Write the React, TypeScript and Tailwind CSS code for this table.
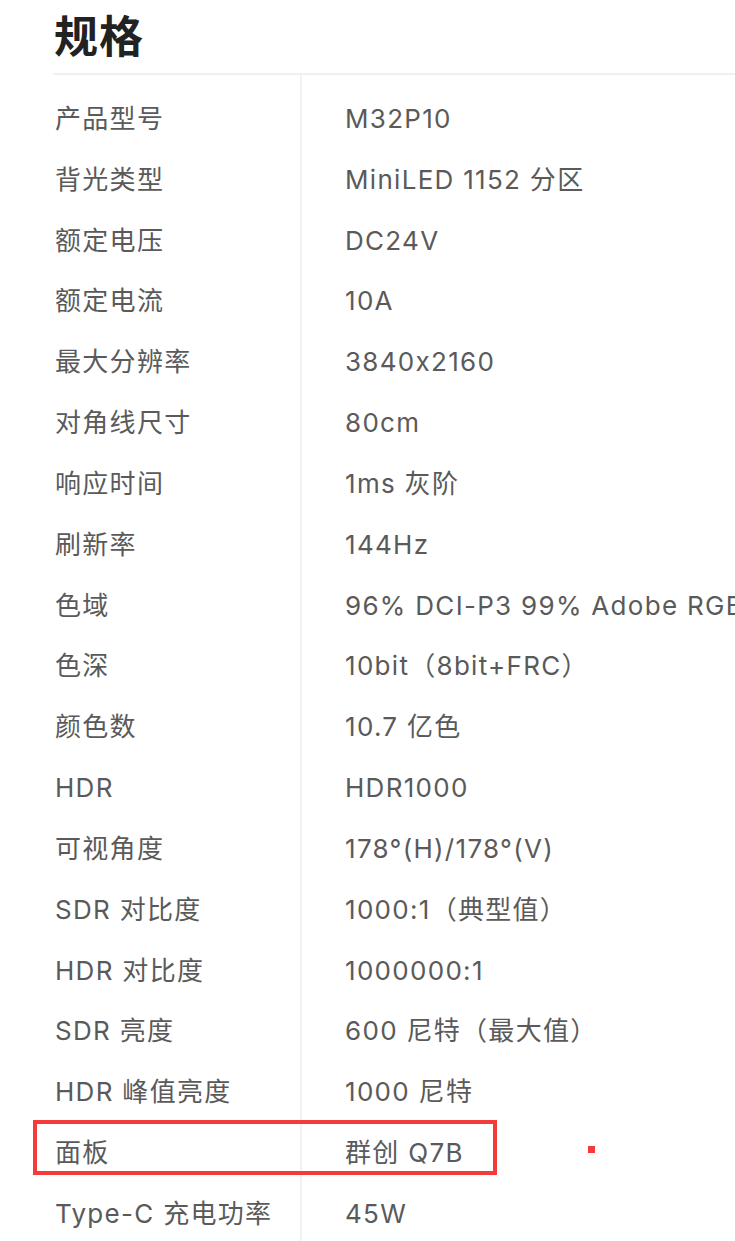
const rows: [string, string][] = [
  ['产品型号', 'M32P10'],
  ['背光类型', 'MiniLED 1152 分区'],
  ['额定电压', 'DC24V'],
  ['额定电流', '10A'],
  ['最大分辨率', '3840x2160'],
  ['对角线尺寸', '80cm'],
  ['响应时间', '1ms 灰阶'],
  ['刷新率', '144Hz'],
  ['色域', '96% DCI-P3 99% Adobe RGB'],
  ['色深', '10bit（8bit+FRC）'],
  ['颜色数', '10.7 亿色'],
  ['HDR', 'HDR1000'],
  ['可视角度', '178°(H)/178°(V)'],
  ['SDR 对比度', '1000:1（典型值）'],
  ['HDR 对比度', '1000000:1'],
  ['SDR 亮度', '600 尼特（最大值）'],
  ['HDR 峰值亮度', '1000 尼特'],
  ['面板', '群创 Q7B'],
  ['Type-C 充电功率', '45W'],
];

export default function App() {
  return (
    <div
      className="w-[735px] h-[1241px] overflow-hidden bg-white"
      style={{ fontFamily: 'Inter, "Noto Sans CJK SC", sans-serif' }}
    >
      {/* Title */}
      <div className="pl-[54px] h-[73px] flex items-center">
        <h2 className="text-[44px] font-bold text-[#222] leading-none tracking-wide">规格</h2>
      </div>

      {/* Spec table */}
      <div className="ml-[53px] border-t-2 border-[#f0f0f0] flex flex-col">
        <div className="w-[249px] h-[13px] border-r-2 border-[#f2f2f2]"></div>
        {rows.map(([label, value]) => (
          <div key={label} className="relative flex h-[60.83px] text-[26px] tracking-[1.3px] text-[#5a5a5a] whitespace-nowrap">
            <div className="w-[249px] shrink-0 pl-[2px] flex items-center border-r-2 border-[#f2f2f2]">{label}</div>
            <div className="pl-[43px] shrink-0 flex items-center">{value}</div>
            {label === '面板' && (
              <>
                <div className="absolute left-[-20px] top-[-2px] w-[464px] h-[55px] border-[4px] border-[#f53a3a]"></div>
                <div className="absolute left-[535px] top-[24px] w-[7px] h-[7px] bg-[#f53a3a]"></div>
              </>
            )}
          </div>
        ))}
      </div>
    </div>
  );
}
